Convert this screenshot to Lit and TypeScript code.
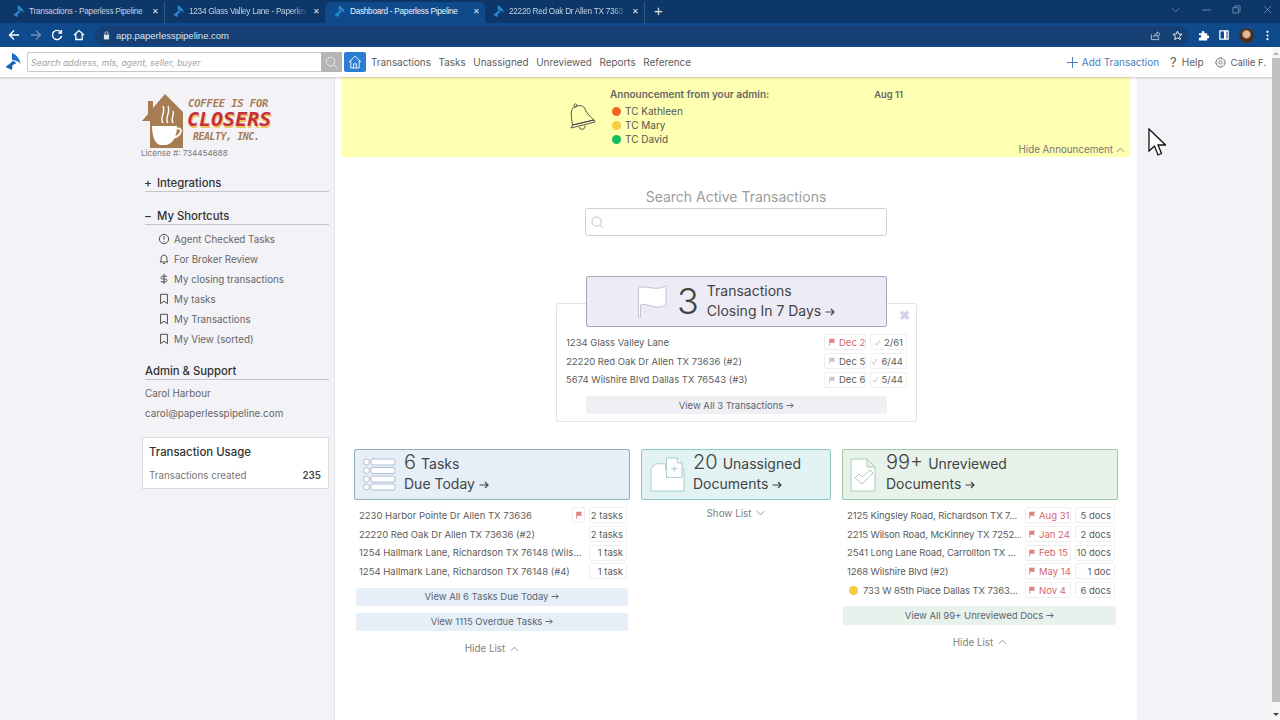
import { LitElement, css, html, svg } from 'lit';
import { customElement } from 'lit/decorators.js';

const favicon = (fill = '#2a86d0') => html`<svg class="fav" viewBox="0 0 16 18" width="11" height="13">
  <path d="M7 0 C12 2 15 6 15.5 11 C13 8 10 7 7 7 Z" fill=${fill} />
  <path d="M7.5 8 C9 8 11 9 11 10.5 L7.5 12 L7 17 L0.5 14 C3 12 6 10 7.5 8 Z" fill=${fill} />
</svg>`;

const flag = (color: string) => html`<svg class="flag" viewBox="0 0 10 10" width="8" height="8">
  <path d="M1.5 1 H9 L7.5 3.5 L9 6 H2.7 V9.5 H1.5 Z" fill=${color} />
</svg>`;

const arrow = html`<svg class="arr" viewBox="0 0 10 8" width="8" height="7" fill="none" stroke="currentColor" stroke-width="1.2">
  <path d="M0.5 4 H9 M6 1 L9 4 L6 7" />
</svg>`;

const bigArrow = html`<span class="bigarr"
  ><svg viewBox="0 0 10 8" width="10" height="8" fill="none" stroke="currentColor" stroke-width="1.2">
    <path d="M0.5 4 H9 M6 1 L9 4 L6 7" /></svg
></span>`;

const chevron = (up: boolean) => html`<svg class="chev" viewBox="0 0 10 6" width="9" height="6" fill="none" stroke="currentColor" stroke-width="0.9">
  <path d=${up ? 'M1 5 L5 1 L9 5' : 'M1 1 L5 5 L9 1'} />
</svg>`;

const bookmark = svg`<path d="M3 1.5 H11 V12.5 L7 9.6 L3 12.5 Z" />`;

const shortcuts = [
  { label: 'Agent Checked Tasks', icon: svg`<circle cx="7" cy="7" r="5.4" /><path d="M7 3.8 V7.8 M7 9.2 V10.2" />` },
  { label: 'For Broker Review', icon: svg`<path d="M2.5 10.5 H11.5 L10.4 8.8 V6 C10.4 4 9 2.5 7 2.5 C5 2.5 3.6 4 3.6 6 V8.8 Z M5.8 12.3 H8.2" />` },
  { label: 'My closing transactions', icon: svg`<path d="M7 1 V13 M10.5 3.7 H5.4 C3 3.7 3 7 5.4 7 H8.6 C11 7 11 10.3 8.6 10.3 H3.2" />` },
  { label: 'My tasks', icon: bookmark },
  { label: 'My Transactions', icon: bookmark },
  { label: 'My View (sorted)', icon: bookmark },
];

const closing = [
  { name: '1234 Glass Valley Lane', date: 'Dec 2', late: true, count: '2/61' },
  { name: '22220 Red Oak Dr Allen TX 73636 (#2)', date: 'Dec 5', late: false, count: '6/44' },
  { name: '5674 Wilshire Blvd Dallas TX 76543 (#3)', date: 'Dec 6', late: false, count: '5/44' },
];

const tasks = [
  { name: '2230 Harbor Pointe Dr Allen TX 73636', flagged: true, count: '2 tasks' },
  { name: '22220 Red Oak Dr Allen TX 73636 (#2)', flagged: false, count: '2 tasks' },
  { name: '1254 Hallmark Lane, Richardson TX 76148 (Wils...', flagged: false, count: '1 task' },
  { name: '1254 Hallmark Lane, Richardson TX 76148 (#4)', flagged: false, count: '1 task' },
];

const docs = [
  { name: '2125 Kingsley Road, Richardson TX 7...', date: 'Aug 31', count: '5 docs', dot: false },
  { name: '2215 Wilson Road, McKinney TX 7252...', date: 'Jan 24', count: '2 docs', dot: false },
  { name: '2541 Long Lane Road, Carrollton TX ...', date: 'Feb 15', count: '10 docs', dot: false },
  { name: '1268 Wilshire Blvd (#2)', date: 'May 14', count: '1 doc', dot: false },
  { name: '733 W 85th Place Dallas TX 7363...', date: 'Nov 4', count: '6 docs', dot: true },
];

@customElement('app-root')
export class AppRoot extends LitElement {
  static styles = css`
    :host {
      display: block;
      width: 1280px;
      height: 720px;
      overflow: hidden;
      position: relative;
      font-family: Inter, 'Open Sans', sans-serif;
      font-size: 10px;
      color: #555;
      background: #fff;
    }
    svg {
      display: block;
      flex: none;
    }

    /* browser chrome */
    .tabs {
      height: 23px;
      background: #0d3768;
      display: flex;
      align-items: flex-end;
      padding-left: 5px;
      color: #c3d2e4;
      font-family: 'Liberation Sans', sans-serif;
      font-size: 8.2px;
      letter-spacing: -0.25px;
    }
    .tab {
      width: 160px;
      height: 21px;
      display: flex;
      align-items: center;
      padding: 0 4px 2px 8px;
      box-sizing: border-box;
      gap: 5px;
      border-right: 1px solid #33577f;
    }
    .tab.active {
      background: #0f4a8c;
      color: #eef3f9;
      border-radius: 6px 6px 0 0;
      border-right: none;
      padding-left: 9px;
    }
    .tab.plain {
      border-right: none;
    }
    .tab span {
      flex: 1;
      white-space: nowrap;
      overflow: hidden;
    }
    .tab span.fade {
      -webkit-mask-image: linear-gradient(to right, #000 88%, transparent);
      mask-image: linear-gradient(to right, #000 88%, transparent);
    }
    .tab i {
      font-style: normal;
      font-size: 8px;
      color: #dfe7f1;
      padding-right: 1px;
    }
    .plus {
      color: #dfe7f1;
      font-size: 15px;
      margin: 0 0 3px 9px;
      line-height: 18px;
    }
    .winctl {
      margin-left: auto;
      align-self: stretch;
      display: flex;
      align-items: center;
      gap: 21.7px;
      padding: 0 8px 4px 0;
      color: #6f8cad;
    }
    .toolbar {
      height: 24px;
      background: #0f4a8c;
      display: flex;
      align-items: center;
      padding-left: 8px;
    }
    .navbtns {
      width: 87px;
      display: flex;
      align-items: center;
      gap: 9.7px;
      color: #fff;
    }
    .omni {
      width: 1093px;
      height: 19px;
      border-radius: 10px;
      background: #163f73;
      display: flex;
      align-items: center;
      padding: 0 5px 0 8px;
      box-sizing: border-box;
      color: #dbe5f0;
      font-family: 'Liberation Sans', sans-serif;
      font-size: 9.5px;
      gap: 6px;
    }
    .omni .end {
      margin-left: auto;
      display: flex;
      gap: 11px;
      align-items: center;
      color: #b9c9dc;
    }
    .exts {
      display: flex;
      align-items: center;
      gap: 10px;
      margin-left: 10px;
      color: #fff;
    }
    .avatar {
      width: 15px;
      height: 15px;
      border-radius: 50%;
      background: radial-gradient(circle at 50% 42%, #e2b69a 0 28%, #4a2e20 42% 70%, #7f6a5c 100%);
    }
    .dots {
      margin-left: 2px;
    }

    /* app header */
    .header {
      width: 1272px;
      height: 30px;
      background: #fff;
      display: flex;
      align-items: center;
      box-sizing: border-box;
      padding-left: 5px;
      box-shadow: 0 1px 2px rgba(0, 0, 0, 0.22);
      position: relative;
      z-index: 2;
    }
    .hsearch {
      display: flex;
      width: 315px;
      height: 20px;
      margin-left: 6px;
    }
    .hsearch .field {
      flex: 1;
      border: 1px solid #c8c8c8;
      border-right: none;
      border-radius: 2px 0 0 2px;
      font-style: italic;
      font-size: 8.8px;
      color: #a3a3a3;
      display: flex;
      align-items: center;
      padding-left: 3px;
      white-space: nowrap;
    }
    .hsearch .go {
      width: 21px;
      background: #b5b5b5;
      display: flex;
      align-items: center;
      justify-content: center;
      color: #eee;
    }
    .home {
      width: 22px;
      height: 20px;
      background: #2a7dd2;
      border-radius: 2px;
      margin-left: 2px;
      display: flex;
      align-items: center;
      justify-content: center;
      color: #fff;
    }
    .nav {
      display: flex;
      gap: 7.7px;
      margin-left: 5px;
      font-size: 9.9px;
      color: #5c5c5c;
      white-space: nowrap;
    }
    .hright {
      margin-left: auto;
      display: flex;
      align-items: center;
      padding-right: 6px;
      white-space: nowrap;
      font-size: 10px;
      color: #5c5c5c;
    }
    .hright .add {
      color: #4a80b8;
      display: flex;
      align-items: center;
      gap: 4px;
      margin-right: 11px;
    }
    .hright .help {
      display: flex;
      align-items: center;
      gap: 5px;
      margin-right: 11px;
    }
    .hright .q {
      font-size: 13px;
    }
    .hright .user {
      display: flex;
      align-items: center;
      gap: 5px;
      font-size: 9.5px;
    }

    /* page body */
    .body {
      display: flex;
      height: 643px;
    }
    .side {
      background: #f3f2f6;
      border-right: 1px solid #e4e4e8;
      padding: 16px 5px 0 141px;
      width: 188px;
      color: #5f5f5f;
    }
    .logo {
      display: flex;
      align-items: flex-start;
      height: 54px;
      width: 132px;
    }
    .logo svg {
      margin: 1px 0 0 1px;
    }
    .logotext {
      display: flex;
      flex-direction: column;
      margin-left: 1px;
      font-family: 'DejaVu Sans Mono', monospace;
      font-weight: 700;
      font-style: italic;
      color: #a67c52;
      line-height: 1;
      white-space: nowrap;
    }
    .logotext .a {
      font-size: 10.5px;
      letter-spacing: -0.15px;
      margin: 5px 0 0 1px;
    }
    .logotext .b {
      font-size: 20px;
      color: #c43040;
      text-shadow: 1px 2px 0 #f2c55c;
    }
    .logotext .c {
      font-size: 10px;
      letter-spacing: -0.5px;
      margin: 3.5px 0 0 6px;
    }
    .license {
      font-size: 8.1px;
      color: #777;
      margin-top: 1px;
      white-space: nowrap;
    }
    .sec {
      margin-left: 4px;
      font-size: 11.3px;
      font-weight: 500;
      color: #333;
      display: flex;
      align-items: center;
      height: 15px;
      border-bottom: 1px solid #c4c4c8;
      padding-bottom: 1px;
      white-space: nowrap;
    }
    .sec b {
      font-weight: 500;
      width: 12px;
      font-size: 12px;
      text-align: center;
      margin-right: 1px;
      margin-left: -3px;
      padding-right: 2px;
    }
    .sec.first {
      margin-top: 17px;
    }
    .sec.second {
      margin-top: 16px;
    }
    .sec.third {
      margin-top: 14px;
    }
    .links {
      margin: 4px 0 0 17px;
    }
    .links div {
      display: flex;
      align-items: center;
      height: 20px;
      gap: 4px;
      font-size: 9.8px;
      white-space: nowrap;
      color: #666;
    }
    .admin {
      margin-left: 4px;
      margin-top: 3px;
      font-size: 9.9px;
      color: #666;
    }
    .admin div {
      height: 20px;
      display: flex;
      align-items: center;
    }
    .usage {
      margin: 14px 0 0 1px;
      height: 52px;
      box-sizing: border-box;
      background: #fff;
      border: 1px solid #dcdcdc;
      padding: 7px 7px 0 6px;
    }
    .usage .t {
      font-size: 11.4px;
      font-weight: 500;
      color: #333;
    }
    .usage .r {
      display: flex;
      justify-content: space-between;
      margin-top: 11px;
      font-size: 9.8px;
      color: #777;
    }
    .usage .r b {
      font-weight: 600;
      color: #444;
    }

    .main {
      width: 802px;
      box-sizing: border-box;
      padding: 0 7px;
      background: #fff;
    }
    .banner {
      height: 80px;
      background: #ffffb2;
      display: flex;
      position: relative;
      padding-left: 228px;
      box-sizing: border-box;
      color: #555;
    }
    .bell {
      margin-top: 26px;
      color: #444;
    }
    .bannertext {
      margin-left: 14px;
      padding-top: 10px;
      font-size: 10px;
    }
    .bhead {
      display: flex;
      font-weight: 600;
      width: 293px;
      justify-content: space-between;
      color: #666;
      height: 14px;
      margin-bottom: 3px;
      align-items: center;
    }
    .bhead span:last-child {
      font-size: 9.4px;
    }
    .tc {
      display: flex;
      align-items: center;
      height: 14px;
      gap: 4px;
      padding-left: 2px;
    }
    .dot {
      width: 9px;
      height: 9px;
      border-radius: 50%;
      flex: none;
    }
    .hide-ann {
      position: absolute;
      right: 5px;
      bottom: 2px;
      display: flex;
      align-items: center;
      gap: 3px;
      color: #777;
      font-size: 9.8px;
    }
    .searchlabel {
      margin-top: 32px;
      text-align: center;
      font-size: 14px;
      color: #9c9c9c;
      line-height: 16px;
    }
    .bigsearch {
      width: 302px;
      height: 28px;
      margin: 3px auto 0;
      border: 1px solid #cfcfcf;
      border-radius: 3px;
      box-sizing: border-box;
      display: flex;
      align-items: center;
      padding-left: 5px;
      color: #bbb;
    }
    .closing {
      width: 361px;
      margin: 40px 0 0 214px;
      position: relative;
    }
    .banner-card {
      display: flex;
      align-items: center;
      box-sizing: border-box;
      border: 1px solid;
      border-radius: 2px;
      color: #444;
      font-size: 14px;
      line-height: 20px;
      white-space: nowrap;
    }
    .bigarr {
      display: inline-block;
    }
    .closehead {
      width: 301px;
      height: 51px;
      margin-left: 30px;
      position: relative;
      z-index: 1;
      background: #ecebf6;
      border-color: #a8a7bb;
      padding: 0 0 2px 50px;
    }
    .closehead .big {
      font-size: 36px;
      font-weight: 300;
      margin: 0 8px 0 10px;
      line-height: 40px;
    }
    .panel {
      margin-top: -24px;
      height: 119px;
      border: 1px solid #e3e3e3;
      border-radius: 2px;
      box-sizing: border-box;
      padding: 29px 9px 0 9px;
      position: relative;
    }
    .x {
      position: absolute;
      right: 6px;
      top: 3px;
      font-size: 13px;
      font-weight: 700;
      color: #d4d4e8;
    }
    .row {
      display: flex;
      align-items: center;
      height: 18.7px;
      gap: 4px;
      font-size: 9.5px;
      color: #5c5c5c;
      white-space: nowrap;
    }
    .row .name {
      flex: 1;
      min-width: 0;
      overflow: hidden;
      display: flex;
      align-items: center;
      gap: 5px;
    }
    .row .name .dot {
      margin-left: 2px;
    }
    .c3 .row .name span {
      letter-spacing: -0.1px;
    }
    .chip {
      height: 16px;
      box-sizing: border-box;
      border: 1px solid #efefef;
      border-radius: 2px;
      display: flex;
      align-items: center;
      justify-content: flex-end;
      gap: 3px;
      padding: 0 3px;
      flex: none;
      font-size: 9.5px;
    }
    .chip.late {
      color: #d0696d;
    }
    .chip.date {
      width: 42px;
      justify-content: flex-start;
    }
    .chip.count {
      width: 37px;
    }
    .chip.task {
      width: 38px;
    }
    .chip.flagonly {
      width: 13px;
      padding: 0 2px;
      justify-content: center;
    }
    .chip.docdate {
      width: 46px;
      justify-content: flex-start;
      padding-left: 2px;
    }
    .chip.doc {
      width: 40px;
    }
    .view {
      height: 18px;
      border-radius: 3px;
      display: flex;
      align-items: center;
      justify-content: center;
      gap: 3px;
      font-size: 9.5px;
      color: #5c6470;
      white-space: nowrap;
    }
    .panel .view {
      width: 301px;
      margin: 7px 0 0 20px;
      background: #f0f0f4;
    }
    .cols {
      margin: 27px 0 0 12px;
      display: flex;
      gap: 11px;
      align-items: flex-start;
    }
    .col {
      flex: none;
    }
    .c1 {
      width: 276px;
    }
    .c2 {
      width: 190px;
    }
    .c3 {
      width: 276px;
    }
    .ch {
      height: 51px;
    }
    .c1 .ch {
      background: #e6eff8;
      border-color: #90b0bf;
      padding-left: 8px;
    }
    .c2 .ch {
      background: #e3f3f3;
      border-color: #8cc8c4;
      padding-left: 8px;
    }
    .c3 .ch {
      background: #e7f3ea;
      border-color: #9cc8a8;
      padding-left: 7px;
    }
    .num {
      font-size: 20px;
      font-weight: 300;
      margin-right: 5px;
      line-height: 20px;
    }
    .chtxt {
      margin: -3px 0 0 8px;
    }
    .chtxt.wide {
      margin-left: 10px;
    }
    .list {
      padding: 6px 3px 0 5px;
    }
    .c1 .view {
      margin: 0 2px 7px 2px;
      background: #e6eff8;
    }
    .c3 .view {
      margin: 0 2px 0 1px;
      height: 19px;
      background: #e8f2ec;
    }
    .views {
      margin-top: 7px;
    }
    .toggle {
      display: flex;
      align-items: center;
      justify-content: center;
      gap: 5px;
      font-size: 9.8px;
      color: #808080;
      height: 14px;
    }
    .c1 .toggle {
      margin-top: 11px;
    }
    .c2 .toggle {
      margin-top: 6px;
    }
    .c3 .toggle {
      margin-top: 10px;
    }

    .rail {
      width: 135px;
      background: #f3f2f6;
    }
    .scroll {
      position: absolute;
      left: 1272px;
      top: 47px;
      width: 8px;
      height: 673px;
      background: #f6f6f6;
      display: flex;
      flex-direction: column;
      align-items: center;
      z-index: 3;
    }
    .scroll .up,
    .scroll .down {
      width: 0;
      height: 0;
      border-left: 3px solid transparent;
      border-right: 3px solid transparent;
    }
    .scroll .up {
      border-bottom: 3px solid #b0b0b0;
      margin-top: 5px;
    }
    .scroll .down {
      border-top: 3px solid #444;
      margin-top: 11px;
    }
    .scroll .thumb {
      width: 8px;
      margin-top: 3px;
      height: 644px;
      background: #c1c1c1;
    }
    .cursor {
      position: absolute;
      left: 1148px;
      top: 128px;
      z-index: 4;
    }
  `;

  private tab(title: string, active = false, plain = false, fade = false) {
    return html`<div class="tab ${active ? 'active' : ''} ${plain ? 'plain' : ''}">
      ${favicon()}<span class=${fade ? 'fade' : ''}>${title}</span><i>✕</i>
    </div>`;
  }

  private chrome() {
    return html`
      <div class="tabs">
        ${this.tab('Transactions - Paperless Pipeline')} ${this.tab('1234 Glass Valley Lane - Paperles', false, true, true)}
        ${this.tab('Dashboard - Paperless Pipeline', true, true)} ${this.tab('22220 Red Oak Dr Allen TX 7363', false, false, true)}
        <div class="plus">+</div>
        <div class="winctl">
          <svg viewBox="0 0 10 6" width="9" height="6" fill="none" stroke="currentColor"><path d="M1 1 L5 5 L9 1" /></svg>
          <svg viewBox="0 0 10 2" width="9" height="2" fill="none" stroke="currentColor"><path d="M0 1 H10" /></svg>
          <svg viewBox="0 0 10 10" width="9" height="9" fill="none" stroke="currentColor"><path d="M1 3 H7 V9 H1 Z M3 3 V1 H9 V7 H7" /></svg>
          <svg viewBox="0 0 10 10" width="9" height="9" fill="none" stroke="currentColor"><path d="M1 1 L9 9 M9 1 L1 9" /></svg>
        </div>
      </div>
      <div class="toolbar">
        <div class="navbtns">
          <svg viewBox="0 0 12 12" width="12" height="12" fill="none" stroke="currentColor" stroke-width="1.4"><path d="M11 6 H1.5 M6 1.5 L1.5 6 L6 10.5" /></svg>
          <svg viewBox="0 0 12 12" width="12" height="12" fill="none" stroke="#6d8fb8" stroke-width="1.4"><path d="M1 6 H10.5 M6 1.5 L10.5 6 L6 10.5" /></svg>
          <svg viewBox="0 0 12 12" width="12" height="12" fill="none" stroke="currentColor" stroke-width="1.4"><path d="M10 3.5 A4.6 4.6 0 1 0 10.6 7 M10.4 1 V4 H7.4" /></svg>
          <svg viewBox="0 0 12 12" width="12" height="12" fill="none" stroke="currentColor" stroke-width="1.3"><path d="M1 6 L6 1.5 L11 6 M2.8 5 V10.5 H9.2 V5" /></svg>
        </div>
        <div class="omni">
          <svg viewBox="0 0 8 10" width="7" height="9" fill="#dbe5f0"><path d="M1 4 H7 V9.5 H1 Z" /><path d="M2.2 4 V2.6 A1.8 1.8 0 0 1 5.8 2.6 V4" fill="none" stroke="#dbe5f0" /></svg>
          app.paperlesspipeline.com
          <div class="end">
            <svg viewBox="0 0 12 12" width="11" height="11" fill="none" stroke="currentColor"><path d="M1.5 5 V10.5 H9.5 V7.5 M4 7.5 C4.5 5 6 3.8 8 3.8 V2 L11 4.8 L8 7.5 V5.8 C6.5 5.8 5 6.2 4 7.5 Z" /></svg>
            <svg viewBox="0 0 12 12" width="11" height="11" fill="none" stroke="#fff"><path d="M6 1.2 L7.4 4.4 L10.9 4.7 L8.2 7 L9.1 10.4 L6 8.6 L2.9 10.4 L3.8 7 L1.1 4.7 L4.6 4.4 Z" /></svg>
          </div>
        </div>
        <div class="exts">
          <svg viewBox="0 0 12 12" width="11" height="11" fill="currentColor"><path d="M1 3.5 H4 V2.5 A1.5 1.5 0 0 1 7 2.5 V3.5 H10 V6 H11 A1.5 1.5 0 0 1 11 9 H10 V11.5 H1 V8.5 H2 A1.5 1.5 0 0 0 2 5.5 H1 Z" /></svg>
          <svg viewBox="0 0 12 12" width="10" height="10" fill="none" stroke="currentColor" stroke-width="1.5"><path d="M1 1 H11 V11 H1 Z" /><path d="M7.5 1 V11" stroke-width="3" /></svg>
          <div class="avatar"></div>
          <svg class="dots" viewBox="0 0 3 12" width="3" height="11" fill="currentColor"><circle cx="1.5" cy="2" r="1.2" /><circle cx="1.5" cy="6" r="1.2" /><circle cx="1.5" cy="10" r="1.2" /></svg>
        </div>
      </div>
    `;
  }

  private appHeader() {
    return html`<div class="header">
      <svg viewBox="0 0 16 18" width="16" height="18">
        <path d="M7 0 C12 2 15 6 15.5 11 C13 8 10 7 7 7 Z" fill="#1f6fc4" />
        <path d="M7.5 8 C9 8 11 9 11 10.5 L7.5 12 L7 17 L0.5 14 C3 12 6 10 7.5 8 Z" fill="#1763b0" />
      </svg>
      <div class="hsearch">
        <div class="field">Search address, mls, agent, seller, buyer</div>
        <div class="go">
          <svg viewBox="0 0 14 14" width="13" height="13" fill="none" stroke="currentColor"><circle cx="6" cy="6" r="4.6" /><path d="M9.5 9.5 L13 13" /></svg>
        </div>
      </div>
      <div class="home">
        <svg viewBox="0 0 14 14" width="14" height="14" fill="none" stroke="currentColor" stroke-width="0.9"><path d="M1 7 L7 1.2 L13 7 M2.8 5.8 V13 H11.2 V5.8 M5.6 13 V8.8 H8.4 V13" /></svg>
      </div>
      <div class="nav">
        <span>Transactions</span><span>Tasks</span><span>Unassigned</span><span>Unreviewed</span><span>Reports</span><span>Reference</span>
      </div>
      <div class="hright">
        <div class="add">
          <svg viewBox="0 0 11 11" width="11" height="11" fill="none" stroke="currentColor"><path d="M5.5 0 V11 M0 5.5 H11" /></svg>
          Add Transaction
        </div>
        <div class="help"><span class="q">?</span>Help</div>
        <div class="user">
          <svg viewBox="0 0 12 12" width="11" height="11" fill="none" stroke="currentColor" stroke-width="0.8">
            <circle cx="6" cy="6" r="1.8" />
            <path d="M5 0.8 H7 L7.4 2.3 L8.8 1.7 L10.3 3.2 L9.7 4.6 L11.2 5 V7 L9.7 7.4 L10.3 8.8 L8.8 10.3 L7.4 9.7 L7 11.2 H5 L4.6 9.7 L3.2 10.3 L1.7 8.8 L2.3 7.4 L0.8 7 V5 L2.3 4.6 L1.7 3.2 L3.2 1.7 L4.6 2.3 Z" />
          </svg>
          Callie F.
        </div>
      </div>
    </div>`;
  }

  private sidebar() {
    return html`<aside class="side">
      <div class="logo">
        <svg viewBox="0 0 44 54" width="44" height="54">
          <path d="M0 27 L6 20 V7 H11 V14 L23 0 L41 18 V54 H8 V27 Z" fill="#a67c52" />
          <path d="M21 29 C17 24 24 19 21 12 M26 29 C22 24 29 19 26 12 M31 29 C28 25 33 21 31 17" stroke="#fff" stroke-width="1.4" fill="none" />
          <path d="M10 32 H35 C35 42 31 50 24 51 H18 C13 50 10 42 10 32 Z" fill="#fff" />
          <path d="M34 35 C41 32 41 41 31 44" stroke="#fff" stroke-width="1.8" fill="none" />
        </svg>
        <div class="logotext">
          <div class="a">COFFEE IS FOR</div>
          <div class="b">CLOSERS</div>
          <div class="c">REALTY, INC.</div>
        </div>
      </div>
      <div class="license">License #: 734454688</div>
      <div class="sec first"><b>+</b>Integrations</div>
      <div class="sec second"><b>−</b>My Shortcuts</div>
      <div class="links">
        ${shortcuts.map(
          s => html`<div>
            <svg viewBox="0 0 14 14" width="12" height="12" fill="none" stroke="#444" stroke-width="1.1">${s.icon}</svg>
            ${s.label}
          </div>`,
        )}
      </div>
      <div class="sec third">Admin &amp; Support</div>
      <div class="admin">
        <div>Carol Harbour</div>
        <div>carol@paperlesspipeline.com</div>
      </div>
      <div class="usage">
        <div class="t">Transaction Usage</div>
        <div class="r"><span>Transactions created</span><b>235</b></div>
      </div>
    </aside>`;
  }

  private closingBlock() {
    return html`<div class="closing">
      <div class="banner-card closehead">
        <svg viewBox="0 0 30 34" width="30" height="34" fill="#fff" stroke="#c4c4cc">
          <path d="M1.5 4 C9 0 16 8 29 2 V21 C18 27 10 18 3.5 21 V33 H1.5 Z" />
        </svg>
        <span class="big">3</span>
        <div>Transactions<br />Closing In 7 Days ${bigArrow}</div>
      </div>
      <div class="panel">
        <span class="x">✖</span>
        ${closing.map(
          r => html`<div class="row">
            <div class="name"><span>${r.name}</span></div>
            <div class="chip date ${r.late ? 'late' : ''}">${flag(r.late ? '#e08080' : '#c8c8c8')}${r.date}</div>
            <div class="chip count">
              <svg viewBox="0 0 8 8" width="7" height="7" fill="none" stroke="#aaa" stroke-width="0.8"><path d="M1 4.5 L3 7 L7 1" /></svg>
              ${r.count}
            </div>
          </div>`,
        )}
        <div class="view">View All 3 Transactions ${arrow}</div>
      </div>
    </div>`;
  }

  private columns() {
    return html`<div class="cols">
      <div class="col c1">
        <div class="banner-card ch">
          <svg viewBox="0 0 33 33" width="33" height="33" fill="#fff" stroke="#9fb2c4" stroke-width="0.8">
            <circle cx="3.5" cy="4" r="3" /><rect x="8" y="1" width="24" height="6" rx="2" />
            <circle cx="3.5" cy="12.5" r="3" /><rect x="8" y="9.5" width="24" height="6" rx="2" />
            <circle cx="3.5" cy="21" r="3" /><rect x="8" y="18" width="24" height="6" rx="2" />
            <circle cx="3.5" cy="29" r="3" /><rect x="8" y="26" width="24" height="6" rx="2" />
          </svg>
          <div class="chtxt"><span class="num">6</span>Tasks<br />Due Today ${bigArrow}</div>
        </div>
        <div class="list">
          ${tasks.map(
            r => html`<div class="row">
              <div class="name"><span>${r.name}</span></div>
              ${r.flagged ? html`<div class="chip flagonly">${flag('#e08080')}</div>` : ''}
              <div class="chip task">${r.count}</div>
            </div>`,
          )}
        </div>
        <div class="views">
          <div class="view">View All 6 Tasks Due Today ${arrow}</div>
          <div class="view">View 1115 Overdue Tasks ${arrow}</div>
        </div>
        <div class="toggle">Hide List ${chevron(true)}</div>
      </div>
      <div class="col c2">
        <div class="banner-card ch">
          <svg viewBox="0 0 36 36" width="35" height="35" fill="#fff" stroke="#8fc0bf" stroke-width="0.8">
            <path d="M1 35 V12 L6 7 H16 V13 H35 V35 Z" />
            <path d="M17 1 H28 L33 6 V21 H17 Z" />
            <path d="M28 1 V6 H33 M25 9 V15 M22 12 H28" />
          </svg>
          <div class="chtxt"><span class="num">20</span>Unassigned<br />Documents ${bigArrow}</div>
        </div>
        <div class="toggle">Show List ${chevron(false)}</div>
      </div>
      <div class="col c3">
        <div class="banner-card ch">
          <svg viewBox="0 0 26 34" width="26" height="34" fill="#fff" stroke="#9cc0a8" stroke-width="0.8">
            <path d="M1 1 H17 L25 9 V33 H1 Z M17 1 V9 H25" />
            <path d="M5 20 L9 16 L12 19 L20 12 L23 15 L12 26 Z" />
          </svg>
          <div class="chtxt wide"><span class="num">99+</span>Unreviewed<br />Documents ${bigArrow}</div>
        </div>
        <div class="list">
          ${docs.map(
            r => html`<div class="row">
              <div class="name">
                ${r.dot ? html`<div class="dot" style="background:#f4cd3c"></div>` : ''}
                <span>${r.name}</span>
              </div>
              <div class="chip docdate late">${flag('#e08080')}${r.date}</div>
              <div class="chip doc">${r.count}</div>
            </div>`,
          )}
        </div>
        <div class="views">
          <div class="view">View All 99+ Unreviewed Docs ${arrow}</div>
        </div>
        <div class="toggle">Hide List ${chevron(true)}</div>
      </div>
    </div>`;
  }

  render() {
    return html`
      ${this.chrome()} ${this.appHeader()}
      <div class="body">
        ${this.sidebar()}
        <main class="main">
          <div class="banner">
            <svg class="bell" viewBox="0 0 26 30" width="26" height="30" fill="none" stroke="currentColor" stroke-width="0.9">
              <circle cx="5.5" cy="2.5" r="1.6" />
              <path d="M4.5 4 C0 6 1 12 2.5 22 L24 17 C19 13 16 9 14.5 5 C13 2 8 2 4.5 4 Z" />
              <path d="M1 25 L25 19 L24 17 L2.5 22 Z M9 24 A3 3 0 0 0 15 22.5" />
            </svg>
            <div class="bannertext">
              <div class="bhead"><span>Announcement from your admin:</span><span>Aug 11</span></div>
              <div class="tc"><div class="dot" style="background:#f26522"></div>TC Kathleen</div>
              <div class="tc"><div class="dot" style="background:#f7cf3f"></div>TC Mary</div>
              <div class="tc"><div class="dot" style="background:#10bf62"></div>TC David</div>
            </div>
            <div class="hide-ann">Hide Announcement ${chevron(true)}</div>
          </div>
          <div class="searchlabel">Search Active Transactions</div>
          <div class="bigsearch">
            <svg viewBox="0 0 14 14" width="13" height="13" fill="none" stroke="currentColor"><circle cx="6" cy="6" r="5" /><path d="M9.6 9.6 L13 13" /></svg>
          </div>
          ${this.closingBlock()} ${this.columns()}
        </main>
        <div class="rail"></div>
      </div>
      <div class="scroll"><div class="up"></div><div class="thumb"></div><div class="down"></div></div>
      <svg class="cursor" viewBox="0 0 18 30" width="18" height="30" fill="#fff" stroke="#111" stroke-width="1.3">
        <path d="M1 1 V23 L6.5 18 L10 27 L13.5 25.5 L10 17 H17.5 Z" />
      </svg>
    `;
  }
}
